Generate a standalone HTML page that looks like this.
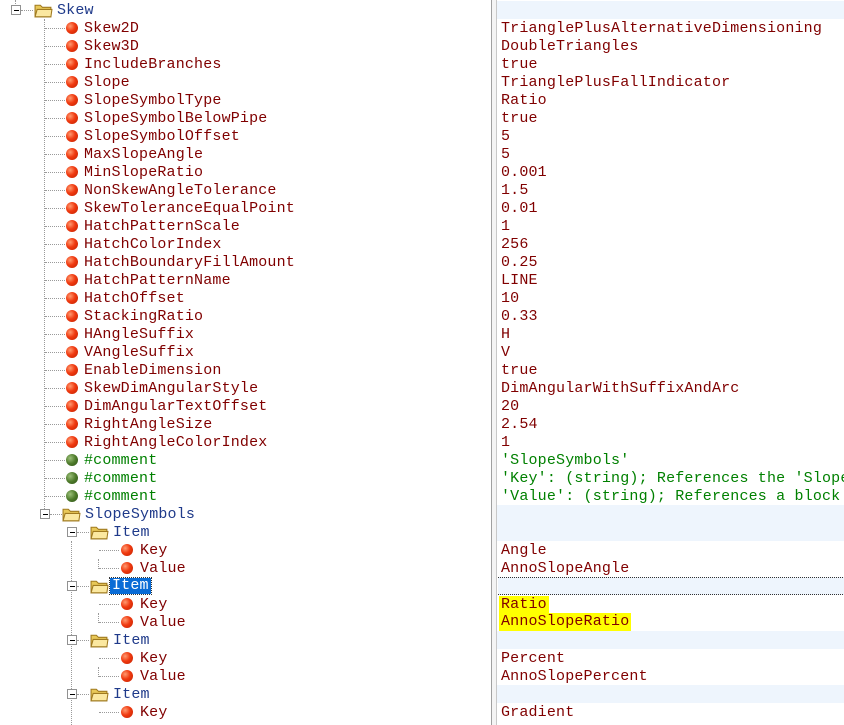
<!DOCTYPE html>
<html><head><meta charset="utf-8"><style>
body{margin:0;width:844px;height:725px;overflow:hidden;background:#fff;font-family:"Liberation Mono",monospace;font-size:15px;letter-spacing:.17px;position:relative}
.a{position:absolute;white-space:nowrap;line-height:18px;height:18px;transform:translateY(1px)}
.n{color:#800000}.f{color:#1f3a8a}.c{color:#008000}
.clip{width:343px;overflow:hidden}
.hl{position:absolute;border-top:1px dotted #9a9a9a;height:0}
.vl{position:absolute;border-left:1px dotted #9a9a9a;width:0}
.b{position:absolute;width:12px;height:12px;border-radius:50%;background:radial-gradient(circle at 35% 35%,#ff9a70 0,#f03a10 45%,#c02000 100%)}
.g{background:radial-gradient(circle at 35% 35%,#9cc07a 0,#4d7a2a 50%,#2f5218 100%)}
.x{position:absolute;width:8px;height:8px;border:1px solid #919191;background:#fff}
.x:after{content:"";position:absolute;left:2px;top:4px;width:5px;height:1px;background:#000}
.fd{position:absolute;width:19px;height:15px}
.bg{position:absolute;left:497px;width:347px;height:18px;background:#eef5fd}
</style></head><body>
<div style="position:absolute;left:491px;top:0;width:1px;height:725px;background:#a0a0a0"></div>
<div style="position:absolute;left:492px;top:0;width:4px;height:725px;background:#f4f4f4"></div>
<div style="position:absolute;left:496px;top:0;width:1px;height:725px;background:#c8c8c8"></div>
<div class="bg" style="top:1px"></div>
<div class="bg" style="top:505px;height:36px"></div>
<div class="bg" style="top:577px;border-top:1px dotted #333;border-bottom:1px dotted #333;height:16px;left:498px"></div>
<div class="bg" style="top:631px"></div>
<div class="bg" style="top:685px"></div>
<svg width="0" height="0" style="position:absolute"><defs><symbol id="fo" viewBox="0 0 18 14"><path d="M1 2h5l2 2h8v9H1z" fill="#e8c858" stroke="#a07a20"/><path d="M1 13l2-7h14l-1 7z" fill="#fbe8a0" stroke="#a07a20"/></symbol></defs></svg>
<div class="vl" style="left:15px;top:0;height:6px"></div>
<div class="x" style="left:11px;top:5px"></div>
<div class="hl" style="left:21px;top:10px;width:12px"></div>
<svg class="fd" style="left:34px;top:3px"><use href="#fo"/></svg>
<div class="a f" style="left:57px;top:1px">Skew</div>
<div class="vl" style="left:44px;top:19px;height:496px"></div>
<div class="vl" style="left:71px;top:541px;height:184px"></div>
<div class="vl" style="left:98px;top:559px;height:10px"></div>
<div class="vl" style="left:98px;top:613px;height:10px"></div>
<div class="vl" style="left:98px;top:667px;height:10px"></div>
<div class="hl" style="left:45px;top:28px;width:20px"></div><div class="b" style="left:66px;top:22px"></div><div class="a n" style="left:84px;top:19px">Skew2D</div><div class="a n" style="left:501px;top:19px">TrianglePlusAlternativeDimensioning</div>
<div class="hl" style="left:45px;top:46px;width:20px"></div><div class="b" style="left:66px;top:40px"></div><div class="a n" style="left:84px;top:37px">Skew3D</div><div class="a n" style="left:501px;top:37px">DoubleTriangles</div>
<div class="hl" style="left:45px;top:64px;width:20px"></div><div class="b" style="left:66px;top:58px"></div><div class="a n" style="left:84px;top:55px">IncludeBranches</div><div class="a n" style="left:501px;top:55px">true</div>
<div class="hl" style="left:45px;top:82px;width:20px"></div><div class="b" style="left:66px;top:76px"></div><div class="a n" style="left:84px;top:73px">Slope</div><div class="a n" style="left:501px;top:73px">TrianglePlusFallIndicator</div>
<div class="hl" style="left:45px;top:100px;width:20px"></div><div class="b" style="left:66px;top:94px"></div><div class="a n" style="left:84px;top:91px">SlopeSymbolType</div><div class="a n" style="left:501px;top:91px">Ratio</div>
<div class="hl" style="left:45px;top:118px;width:20px"></div><div class="b" style="left:66px;top:112px"></div><div class="a n" style="left:84px;top:109px">SlopeSymbolBelowPipe</div><div class="a n" style="left:501px;top:109px">true</div>
<div class="hl" style="left:45px;top:136px;width:20px"></div><div class="b" style="left:66px;top:130px"></div><div class="a n" style="left:84px;top:127px">SlopeSymbolOffset</div><div class="a n" style="left:501px;top:127px">5</div>
<div class="hl" style="left:45px;top:154px;width:20px"></div><div class="b" style="left:66px;top:148px"></div><div class="a n" style="left:84px;top:145px">MaxSlopeAngle</div><div class="a n" style="left:501px;top:145px">5</div>
<div class="hl" style="left:45px;top:172px;width:20px"></div><div class="b" style="left:66px;top:166px"></div><div class="a n" style="left:84px;top:163px">MinSlopeRatio</div><div class="a n" style="left:501px;top:163px">0.001</div>
<div class="hl" style="left:45px;top:190px;width:20px"></div><div class="b" style="left:66px;top:184px"></div><div class="a n" style="left:84px;top:181px">NonSkewAngleTolerance</div><div class="a n" style="left:501px;top:181px">1.5</div>
<div class="hl" style="left:45px;top:208px;width:20px"></div><div class="b" style="left:66px;top:202px"></div><div class="a n" style="left:84px;top:199px">SkewToleranceEqualPoint</div><div class="a n" style="left:501px;top:199px">0.01</div>
<div class="hl" style="left:45px;top:226px;width:20px"></div><div class="b" style="left:66px;top:220px"></div><div class="a n" style="left:84px;top:217px">HatchPatternScale</div><div class="a n" style="left:501px;top:217px">1</div>
<div class="hl" style="left:45px;top:244px;width:20px"></div><div class="b" style="left:66px;top:238px"></div><div class="a n" style="left:84px;top:235px">HatchColorIndex</div><div class="a n" style="left:501px;top:235px">256</div>
<div class="hl" style="left:45px;top:262px;width:20px"></div><div class="b" style="left:66px;top:256px"></div><div class="a n" style="left:84px;top:253px">HatchBoundaryFillAmount</div><div class="a n" style="left:501px;top:253px">0.25</div>
<div class="hl" style="left:45px;top:280px;width:20px"></div><div class="b" style="left:66px;top:274px"></div><div class="a n" style="left:84px;top:271px">HatchPatternName</div><div class="a n" style="left:501px;top:271px">LINE</div>
<div class="hl" style="left:45px;top:298px;width:20px"></div><div class="b" style="left:66px;top:292px"></div><div class="a n" style="left:84px;top:289px">HatchOffset</div><div class="a n" style="left:501px;top:289px">10</div>
<div class="hl" style="left:45px;top:316px;width:20px"></div><div class="b" style="left:66px;top:310px"></div><div class="a n" style="left:84px;top:307px">StackingRatio</div><div class="a n" style="left:501px;top:307px">0.33</div>
<div class="hl" style="left:45px;top:334px;width:20px"></div><div class="b" style="left:66px;top:328px"></div><div class="a n" style="left:84px;top:325px">HAngleSuffix</div><div class="a n" style="left:501px;top:325px">H</div>
<div class="hl" style="left:45px;top:352px;width:20px"></div><div class="b" style="left:66px;top:346px"></div><div class="a n" style="left:84px;top:343px">VAngleSuffix</div><div class="a n" style="left:501px;top:343px">V</div>
<div class="hl" style="left:45px;top:370px;width:20px"></div><div class="b" style="left:66px;top:364px"></div><div class="a n" style="left:84px;top:361px">EnableDimension</div><div class="a n" style="left:501px;top:361px">true</div>
<div class="hl" style="left:45px;top:388px;width:20px"></div><div class="b" style="left:66px;top:382px"></div><div class="a n" style="left:84px;top:379px">SkewDimAngularStyle</div><div class="a n" style="left:501px;top:379px">DimAngularWithSuffixAndArc</div>
<div class="hl" style="left:45px;top:406px;width:20px"></div><div class="b" style="left:66px;top:400px"></div><div class="a n" style="left:84px;top:397px">DimAngularTextOffset</div><div class="a n" style="left:501px;top:397px">20</div>
<div class="hl" style="left:45px;top:424px;width:20px"></div><div class="b" style="left:66px;top:418px"></div><div class="a n" style="left:84px;top:415px">RightAngleSize</div><div class="a n" style="left:501px;top:415px">2.54</div>
<div class="hl" style="left:45px;top:442px;width:20px"></div><div class="b" style="left:66px;top:436px"></div><div class="a n" style="left:84px;top:433px">RightAngleColorIndex</div><div class="a n" style="left:501px;top:433px">1</div>
<div class="hl" style="left:45px;top:460px;width:20px"></div><div class="b g" style="left:66px;top:454px"></div><div class="a c" style="left:84px;top:451px">#comment</div><div class="a c" style="left:501px;top:451px">'SlopeSymbols'</div>
<div class="hl" style="left:45px;top:478px;width:20px"></div><div class="b g" style="left:66px;top:472px"></div><div class="a c" style="left:84px;top:469px">#comment</div><div class="a c clip" style="left:501px;top:469px">'Key': (string); References the 'SlopeSymbolType'</div>
<div class="hl" style="left:45px;top:496px;width:20px"></div><div class="b g" style="left:66px;top:490px"></div><div class="a c" style="left:84px;top:487px">#comment</div><div class="a c clip" style="left:501px;top:487px">'Value': (string); References a block</div>
<div class="x" style="left:40px;top:509px"></div><div class="hl" style="left:50px;top:514px;width:12px"></div>
<svg class="fd" style="left:62px;top:507px"><use href="#fo"/></svg><div class="a f" style="left:85px;top:505px">SlopeSymbols</div>
<div class="x" style="left:67px;top:527px"></div><div class="hl" style="left:77px;top:532px;width:12px"></div>
<svg class="fd" style="left:90px;top:525px"><use href="#fo"/></svg><div class="a f" style="left:113px;top:523px">Item</div>
<div class="hl" style="left:99px;top:550px;width:20px"></div><div class="b" style="left:121px;top:544px"></div><div class="a n" style="left:140px;top:541px">Key</div><div class="a n" style="left:501px;top:541px">Angle</div>
<div class="hl" style="left:99px;top:568px;width:20px"></div><div class="b" style="left:121px;top:562px"></div><div class="a n" style="left:140px;top:559px">Value</div><div class="a n" style="left:501px;top:559px">AnnoSlopeAngle</div>
<div class="x" style="left:67px;top:581px"></div><div class="hl" style="left:77px;top:586px;width:12px"></div>
<svg class="fd" style="left:90px;top:579px"><use href="#fo"/></svg><div class="a" style="left:110px;top:577px;height:16px;line-height:16px;padding:0 2px 0 2px;background:#0a6cd6;color:#fff;outline:1px dotted #333">Item</div>
<div class="hl" style="left:99px;top:604px;width:20px"></div><div class="b" style="left:121px;top:598px"></div><div class="a n" style="left:140px;top:595px">Key</div><div class="a n" style="left:499px;top:595px;background:#ffff00;padding:0 2px;line-height:17px;height:17px">Ratio</div>
<div class="hl" style="left:99px;top:622px;width:20px"></div><div class="b" style="left:121px;top:616px"></div><div class="a n" style="left:140px;top:613px">Value</div><div class="a n" style="left:499px;top:612px;background:#ffff00;padding:0 2px;line-height:18px">AnnoSlopeRatio</div>
<div class="x" style="left:67px;top:635px"></div><div class="hl" style="left:77px;top:640px;width:12px"></div>
<svg class="fd" style="left:90px;top:633px"><use href="#fo"/></svg><div class="a f" style="left:113px;top:631px">Item</div>
<div class="hl" style="left:99px;top:658px;width:20px"></div><div class="b" style="left:121px;top:652px"></div><div class="a n" style="left:140px;top:649px">Key</div><div class="a n" style="left:501px;top:649px">Percent</div>
<div class="hl" style="left:99px;top:676px;width:20px"></div><div class="b" style="left:121px;top:670px"></div><div class="a n" style="left:140px;top:667px">Value</div><div class="a n" style="left:501px;top:667px">AnnoSlopePercent</div>
<div class="x" style="left:67px;top:689px"></div><div class="hl" style="left:77px;top:694px;width:12px"></div>
<svg class="fd" style="left:90px;top:687px"><use href="#fo"/></svg><div class="a f" style="left:113px;top:685px">Item</div>
<div class="hl" style="left:99px;top:712px;width:20px"></div><div class="b" style="left:121px;top:706px"></div><div class="a n" style="left:140px;top:703px">Key</div><div class="a n" style="left:501px;top:703px">Gradient</div>
</body></html>
